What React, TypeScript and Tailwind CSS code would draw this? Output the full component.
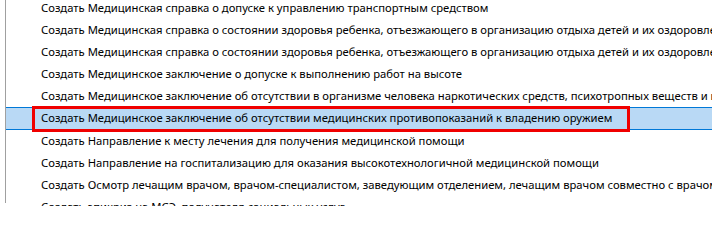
import * as React from 'react';

const items = [
  'Создать Медицинская справка о допуске к управлению транспортным средством',
  'Создать Медицинская справка о состоянии здоровья ребенка, отъезжающего в организацию отдыха детей и их оздоровления',
  'Создать Медицинская справка о состоянии здоровья ребенка, отъезжающего в организацию отдыха детей и их оздоровления',
  'Создать Медицинское заключение о допуске к выполнению работ на высоте',
  'Создать Медицинское заключение об отсутствии в организме человека наркотических средств, психотропных веществ и их метаболитов',
  'Создать Медицинское заключение об отсутствии медицинских противопоказаний к владению оружием',
  'Создать Направление к месту лечения для получения медицинской помощи',
  'Создать Направление на госпитализацию для оказания высокотехнологичной медицинской помощи',
  'Создать Осмотр лечащим врачом, врачом-специалистом, заведующим отделением, лечащим врачом совместно с врачом-специалистом',
  'Создать эпикриз на МСЭ, получателя социальных услуг',
];

const SELECTED = 5;

export default function App() {
  return (
    <div className="h-[206px] w-[712px] overflow-hidden bg-white font-['Noto_Sans',sans-serif] text-[11.25px] text-black">
      <div className="ml-[5px] h-full border-l border-[#a0a0a0]">
        <div className="mt-[-3px] flex flex-col">
          {items.map((text, i) =>
            i === SELECTED ? (
              <div
                key={i}
                className="relative flex h-[23px] items-center whitespace-nowrap border-y border-[#0078d7] bg-[#b9d9f5] pl-[35px]"
              >
                {text}
                <div className="absolute left-[26px] top-[-2px] h-[26px] w-[598px] border-[3px] border-[#f00000]" />
              </div>
            ) : (
              <div key={i} className="flex h-[22px] items-center whitespace-nowrap pl-[35px]">
                {text}
              </div>
            )
          )}
        </div>
      </div>
    </div>
  );
}
